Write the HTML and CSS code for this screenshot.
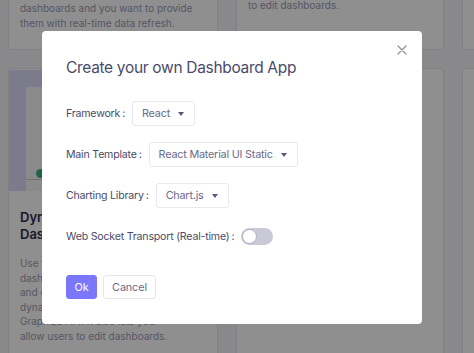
FILE: index.html
```html
<!DOCTYPE html>
<html lang="en">
<head>
<meta charset="utf-8">
<title>Create your own Dashboard App</title>
<link rel="stylesheet" href="styles.css">
</head>
<body>
<div class="page">
  <div class="card card-top">
    <p class="card-text">dashboards and you want to provide<br>them with real-time data refresh.</p>
  </div>
  <div class="card card-top card-top-right">
    <p class="card-text">to edit dashboards.</p>
  </div>
  <div class="card card-top"></div>

  <div class="card card-bottom">
    <div class="thumb">
      <div class="thumb-inner">
        <span class="thumb-line"></span>
        <span class="thumb-dot"></span>
      </div>
    </div>
    <h3 class="card-title">Dynamic<br>Dashboard</h3>
    <p class="card-text">Use this template to build dynamic<br>dashboards and allow users to add<br>and delete charts built with<br>dynamic queries through a<br>GraphQL API. It also lets you<br>allow users to edit dashboards.</p>
  </div>
  <div class="card card-bottom"></div>
  <div class="card card-bottom"></div>
</div>

<div class="overlay">
  <div class="modal">
    <button class="close" aria-label="Close">
      <svg width="10" height="10" viewBox="0 0 10 10"><path d="M1 1L9 9M9 1L1 9" stroke="#8e8e9c" stroke-width="1.2" fill="none" stroke-linecap="round"/></svg>
    </button>
    <h2 class="title">Create your own Dashboard App</h2>
    <div class="form">
      <div class="row">
        <span class="label">Framework</span><span class="colon">:</span>
        <span class="select">React<i class="caret"></i></span>
      </div>
      <div class="row">
        <span class="label">Main Template</span><span class="colon">:</span>
        <span class="select">React Material UI Static<i class="caret"></i></span>
      </div>
      <div class="row">
        <span class="label">Charting Library</span><span class="colon">:</span>
        <span class="select">Chart.js<i class="caret"></i></span>
      </div>
      <div class="row">
        <span class="label">Web Socket Transport (Real-time)</span><span class="colon">:</span>
        <span class="switch"><span class="knob"></span></span>
      </div>
    </div>
    <div class="actions">
      <button class="btn btn-primary">Ok</button>
      <button class="btn btn-default">Cancel</button>
    </div>
  </div>
</div>
</body>
</html>
```

FILE: styles.css
```css
* { box-sizing: border-box; }

html, body {
  margin: 0;
  padding: 0;
  width: 474px;
  height: 353px;
  overflow: hidden;
}

body {
  background: #f4f4f9;
  font-family: Inter, "Noto Sans", sans-serif;
  position: relative;
}

.page {
  display: grid;
  grid-template-columns: 210px 208px 210px;
  grid-template-rows: 60px 320px;
  column-gap: 18px;
  row-gap: 18px;
  padding-left: 8px;
  margin-top: -10px;
}

.card {
  background: #ffffff;
  border: 1px solid #e4e4ee;
  border-radius: 4px;
  overflow: hidden;
}

.card-top {
  padding: 10px 11px 0;
}

.card-top-right {
  padding-top: 7px;
}

.card-text {
  margin: 0;
  font-size: 10px;
  line-height: 15px;
  color: #9a9ab0;
  white-space: nowrap;
}

.thumb {
  margin: 1px 0 0;
  height: 121px;
  background: #dcdcfa;
  padding: 17px 0 0 17px;
}

.thumb-inner {
  height: 100%;
  background: #f6f6fb;
  position: relative;
}

.thumb-line {
  position: absolute;
  left: 0;
  top: 92px;
  width: 60px;
  height: 1px;
  background: #c8c8d4;
}

.thumb-dot {
  position: absolute;
  left: 10px;
  top: 82px;
  width: 9px;
  height: 9px;
  border-radius: 50%;
  background: #38b27a;
}

.card-title {
  margin: 18px 11px 0;
  font-size: 13px;
  line-height: 17px;
  font-weight: 600;
  color: #2f2f4a;
}

.card-bottom .card-text {
  margin: 13px 11px 0;
  line-height: 14.6px;
}

.overlay {
  position: absolute;
  inset: 0;
  background: rgba(0, 0, 0, 0.44);
  padding: 31px 0 0 42px;
}

.modal {
  position: relative;
  width: 380px;
  height: 293px;
  background: #ffffff;
  border-radius: 4px;
  padding: 24px 24px 25px;
}

.close {
  position: absolute;
  top: 14px;
  right: 15px;
  width: 10px;
  height: 10px;
  padding: 0;
  border: 0;
  background: none;
  display: flex;
}

.close svg { display: block; }

.title {
  margin: 0;
  font-size: 15.5px;
  letter-spacing: -0.32px;
  line-height: 26px;
  font-weight: 400;
  color: #4a4a6a;
}

.form {
  margin-top: 20px;
  display: flex;
  flex-direction: column;
  gap: 16px;
}

.row {
  display: flex;
  align-items: center;
  height: 25px;
  font-size: 10.6px;
  letter-spacing: -0.2px;
  color: #4a4a68;
}

.colon {
  margin: 0 7px 0 2px;
}

.select {
  display: inline-flex;
  align-items: center;
  height: 25px;
  padding: 0 10px 0 9px;
  border: 1px solid #e8e8f0;
  border-radius: 3px;
  color: #6a6a8c;
  background: #fff;
  font-size: 10.8px;
  letter-spacing: -0.2px;
}

.caret {
  display: inline-block;
  margin-left: 8px;
  width: 0;
  height: 0;
  border-left: 3.5px solid transparent;
  border-right: 3.5px solid transparent;
  border-top: 4.5px solid #58587a;
}

.switch {
  display: inline-flex;
  align-items: center;
  width: 32px;
  height: 17px;
  border-radius: 9px;
  background: #c9c9d8;
  padding: 0 0 0 1px;
}

.knob {
  width: 15px;
  height: 15px;
  border-radius: 50%;
  background: #fff;
  border: 1px solid #b0b0c0;
}

.actions {
  margin-top: 26px;
  display: flex;
  gap: 6px;
}

.btn {
  height: 24px;
  border-radius: 3px;
  font-family: Inter, "Noto Sans", sans-serif;
  font-size: 10.8px;
  letter-spacing: -0.1px;
  padding: 0;
  cursor: pointer;
}

.btn-primary {
  width: 31px;
  background: #7a77fb;
  border: 1px solid #7a77fb;
  color: #fff;
}

.btn-default {
  width: 53px;
  background: #fff;
  border: 1px solid #e6e6ef;
  color: #6a6a8a;
}
```
